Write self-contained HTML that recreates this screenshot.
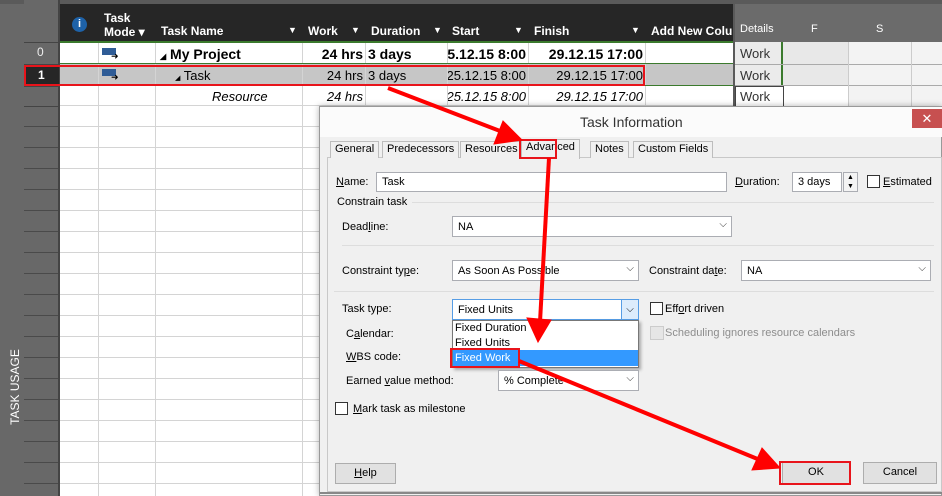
<!DOCTYPE html>
<html><head><meta charset="utf-8"><style>
*{margin:0;padding:0;box-sizing:border-box}
body{width:942px;height:496px;overflow:hidden;background:#fff;font-family:"Liberation Sans",sans-serif;position:relative}
.a{position:absolute;white-space:nowrap}
.hd{color:#fff;font-weight:bold;font-size:12px}
.dl{font-size:11px;color:#000;white-space:nowrap}
.in{background:#fff;border:1px solid #abadb3}
.sel{background:#fff;border:1px solid #abadb3}
.chev{position:absolute;right:4px;top:2px;font-size:10px;color:#333}
.cb{background:#fff;border:1px solid #333;width:13px;height:13px}
.btn{background:#e1e1e1;border:1px solid #adadad;font-size:11px;text-align:center;line-height:19px}
.tab{position:absolute;top:141px;height:17px;border:1px solid #bdbdbd;border-bottom:none;background:#f0f0f0;font-size:11px;line-height:15px;padding:0 4px;white-space:nowrap}
.red{position:absolute;border:2px solid #e8141b}
.clip{overflow:hidden}
.clip span{position:absolute;right:2px;top:0}
</style></head><body>
<div class="a" style="left:0;top:0;width:60px;height:496px;background:#686868"></div>
<div class="a" style="left:0;top:0;width:942px;height:4px;background:#5a5a5a"></div>
<div class="a" style="left:58px;top:0;width:2px;height:496px;background:#444"></div>
<div class="a" style="left:24px;top:0;width:34px;height:496px;background:repeating-linear-gradient(to bottom,transparent 0,transparent 20px,#4a4a4a 20px,#4a4a4a 21px);background-position:0 1px"></div>
<div class="a" style="left:24px;top:0;width:34px;height:107px;background:#686868"></div>
<div class="a" style="left:-30px;top:380px;width:90px;height:14px;transform:rotate(-90deg);color:#fff;font-size:12px;text-align:center">TASK USAGE</div>
<div class="a" style="left:24px;top:42px;width:34px;height:1px;background:#444"></div>
<div class="a" style="left:24px;top:64px;width:34px;height:1px;background:#444"></div>
<div class="a" style="left:24px;top:86px;width:34px;height:1px;background:#444"></div>
<div class="a" style="left:24px;top:106px;width:34px;height:1px;background:#444"></div>
<div class="a" style="left:37px;top:45px;color:#eee;font-size:12px">0</div>
<div class="a" style="left:25px;top:65px;width:34px;height:20px;background:#262626;color:#fff;font-size:12px;font-weight:bold;padding-left:13px;line-height:20px">1</div>

<div class="a" style="left:60px;top:42px;width:673px;height:454px;background:repeating-linear-gradient(to bottom,transparent 0,transparent 20px,#d4d4d4 20px,#d4d4d4 21px);background-position:0 1px"></div>
<div class="a" style="left:98px;top:42px;width:1px;height:454px;background:#d4d4d4"></div>
<div class="a" style="left:155px;top:42px;width:1px;height:454px;background:#d4d4d4"></div>
<div class="a" style="left:302px;top:42px;width:1px;height:454px;background:#d4d4d4"></div>
<div class="a" style="left:365px;top:42px;width:1px;height:65px;background:#d4d4d4"></div>
<div class="a" style="left:447px;top:42px;width:1px;height:65px;background:#d4d4d4"></div>
<div class="a" style="left:528px;top:42px;width:1px;height:65px;background:#d4d4d4"></div>
<div class="a" style="left:645px;top:42px;width:1px;height:65px;background:#d4d4d4"></div>
<div class="a" style="left:60px;top:4px;width:673px;height:38px;background:#262626"></div>
<div class="a" style="left:60px;top:41px;width:673px;height:2px;background:#3b7a2d"></div>
<div class="a" style="left:72px;top:17px;width:15px;height:15px;border-radius:50%;background:#1e62a8;color:#fff;font-size:11px;font-weight:bold;text-align:center;line-height:15px">i</div>
<div class="a hd" style="left:104px;top:11px;line-height:14px">Task<br>Mode ▾</div>
<div class="a hd" style="left:161px;top:24px">Task Name</div><div class="a hd" style="left:288px;top:25px;font-size:9px">▼</div>
<div class="a hd" style="left:308px;top:24px">Work</div><div class="a hd" style="left:351px;top:25px;font-size:9px">▼</div>
<div class="a hd" style="left:371px;top:24px">Duration</div><div class="a hd" style="left:433px;top:25px;font-size:9px">▼</div>
<div class="a hd" style="left:452px;top:24px">Start</div><div class="a hd" style="left:514px;top:25px;font-size:9px">▼</div>
<div class="a hd" style="left:534px;top:24px">Finish</div><div class="a hd" style="left:631px;top:25px;font-size:9px">▼</div>
<div class="a hd clip" style="left:651px;top:24px;width:82px;height:16px">Add New Column</div>
<div class="a" style="left:102px;top:48px;width:14px;height:7px;background:#2f5c96"></div><div class="a" style="left:111px;top:51px;font-size:9px">➜</div>
<div class="a" style="left:160px;top:46px;font-size:14px;font-weight:bold"><span style="font-size:8px">◢</span> My Project</div>
<div class="a" style="left:302px;top:46px;width:61px;text-align:right;font-size:14px;font-weight:bold">24 hrs</div>
<div class="a" style="left:368px;top:46px;font-size:14px;font-weight:bold">3 days</div>
<div class="a clip" style="left:448px;top:46px;width:80px;height:18px;font-size:14px;font-weight:bold"><span>25.12.15 8:00</span></div>
<div class="a" style="left:530px;top:46px;width:113px;text-align:right;font-size:14px;font-weight:bold">29.12.15 17:00</div>
<div class="a" style="left:60px;top:63px;width:673px;height:1px;background:#3b7a2d"></div>
<div class="a" style="left:60px;top:64px;width:673px;height:22px;background:#c6c6c6"></div>
<div class="a" style="left:98px;top:64px;width:1px;height:22px;background:#d4d4d4"></div>
<div class="a" style="left:155px;top:64px;width:1px;height:22px;background:#d4d4d4"></div>
<div class="a" style="left:302px;top:64px;width:1px;height:22px;background:#d4d4d4"></div>
<div class="a" style="left:365px;top:64px;width:1px;height:22px;background:#d4d4d4"></div>
<div class="a" style="left:447px;top:64px;width:1px;height:22px;background:#d4d4d4"></div>
<div class="a" style="left:528px;top:64px;width:1px;height:22px;background:#d4d4d4"></div>
<div class="a" style="left:645px;top:64px;width:1px;height:22px;background:#d4d4d4"></div>
<div class="a" style="left:102px;top:69px;width:14px;height:7px;background:#2f5c96"></div><div class="a" style="left:111px;top:72px;font-size:9px">➜</div>
<div class="a" style="left:175px;top:68px;font-size:13px"><span style="font-size:7px">◢</span> Task</div>
<div class="a" style="left:302px;top:68px;width:61px;text-align:right;font-size:13px">24 hrs</div>
<div class="a" style="left:368px;top:68px;font-size:13px">3 days</div>
<div class="a clip" style="left:448px;top:68px;width:80px;height:16px;font-size:13px"><span>25.12.15 8:00</span></div>
<div class="a" style="left:530px;top:68px;width:113px;text-align:right;font-size:13px">29.12.15 17:00</div>
<div class="a" style="left:60px;top:85px;width:673px;height:1px;background:#3b7a2d"></div>
<div class="a" style="left:212px;top:89px;font-size:13px;font-style:italic">Resource</div>
<div class="a" style="left:302px;top:89px;width:61px;text-align:right;font-size:13px;font-style:italic">24 hrs</div>
<div class="a clip" style="left:448px;top:89px;width:80px;height:16px;font-size:13px;font-style:italic"><span>25.12.15 8:00</span></div>
<div class="a" style="left:530px;top:89px;width:113px;text-align:right;font-size:13px;font-style:italic">29.12.15 17:00</div>

<div class="a" style="left:733px;top:4px;width:209px;height:103px;background:#5a5a5a"></div>
<div class="a" style="left:735px;top:4px;width:207px;height:38px;background:#6b6b6b"></div>
<div class="a" style="left:740px;top:23px;color:#fff;font-size:11px">Details</div>
<div class="a" style="left:811px;top:23px;color:#fff;font-size:11px">F</div>
<div class="a" style="left:876px;top:23px;color:#fff;font-size:11px">S</div>
<div class="a" style="left:735px;top:42px;width:207px;height:65px;background:#f3f3f3"></div>
<div class="a" style="left:783px;top:42px;width:65px;height:43px;background:#e8e8e8"></div>
<div class="a" style="left:783px;top:85px;width:65px;height:22px;background:#fff"></div>
<div class="a" style="left:735px;top:42px;width:48px;height:44px;background:#ebebeb;border-right:2px solid #3b7a2d"></div>
<div class="a" style="left:735px;top:86px;width:49px;height:21px;background:#fff;border:1px solid #444"></div>
<div class="a" style="left:735px;top:64px;width:207px;height:1px;background:#aaa"></div>
<div class="a" style="left:735px;top:85px;width:207px;height:1px;background:#aaa"></div>
<div class="a" style="left:848px;top:42px;width:1px;height:65px;background:#ccc"></div>
<div class="a" style="left:911px;top:42px;width:1px;height:65px;background:#ccc"></div>
<div class="a" style="left:740px;top:46px;font-size:13px;color:#333">Work</div>
<div class="a" style="left:740px;top:68px;font-size:13px;color:#333">Work</div>
<div class="a" style="left:740px;top:89px;font-size:13px;color:#333">Work</div>

<div class="a" style="left:319px;top:106px;width:623px;height:390px;background:#f0f0f0;border:1px solid #999;box-shadow:0 0 6px rgba(0,0,0,.3)"></div>
<div class="a" style="left:320px;top:107px;width:622px;height:30px;background:#fbfbfb"></div>
<div class="a" style="left:580px;top:114px;font-size:14px;color:#333">Task Information</div>
<div class="a" style="left:912px;top:109px;width:30px;height:19px;background:#c75050;color:#fff;font-size:13px;text-align:center;line-height:19px">✕</div>
<div class="a" style="left:327px;top:157px;width:615px;height:335px;border:1px solid #c8c8c8;background:#f0f0f0"></div>
<div class="a" style="left:320px;top:492px;width:622px;height:2px;background:#888"></div>
<div class="tab" style="left:330px">General</div>
<div class="tab" style="left:382px">Predecessors</div>
<div class="tab" style="left:460px">Resources</div>
<div class="tab" style="left:521px;top:139px;height:20px">Advanced</div>
<div class="tab" style="left:590px">Notes</div>
<div class="tab" style="left:633px">Custom Fields</div>

<div class="a dl" style="left:336px;top:176px"><u>N</u>ame:</div>
<div class="a in" style="left:376px;top:172px;width:351px;height:20px"><span class="dl" style="position:absolute;left:5px;top:3px">Task</span></div>
<div class="a dl" style="left:735px;top:176px"><u>D</u>uration:</div>
<div class="a in" style="left:792px;top:172px;width:50px;height:20px"><span class="dl" style="position:absolute;left:5px;top:3px">3 days</span></div>
<div class="a" style="left:843px;top:172px;width:15px;height:20px;border:1px solid #abadb3;background:#f4f4f4;font-size:7px;text-align:center;line-height:9px">▲<br>▼</div>
<div class="a cb" style="left:867px;top:175px"></div>
<div class="a dl" style="left:883px;top:176px"><u>E</u>stimated</div>
<div class="a dl" style="left:337px;top:196px">Constrain task</div>
<div class="a" style="left:412px;top:202px;width:522px;height:1px;background:#ddd"></div>
<div class="a dl" style="left:342px;top:221px">Dead<u>l</u>ine:</div>
<div class="a sel" style="left:452px;top:216px;width:280px;height:21px"><span class="dl" style="position:absolute;left:5px;top:4px">NA</span><span class="chev">⌵</span></div>
<div class="a" style="left:342px;top:245px;width:592px;height:1px;background:#ddd"></div>
<div class="a dl" style="left:342px;top:265px">Constraint ty<u>p</u>e:</div>
<div class="a sel" style="left:452px;top:260px;width:187px;height:21px"><span class="dl" style="position:absolute;left:5px;top:4px">As Soon As Possible</span><span class="chev">⌵</span></div>
<div class="a dl" style="left:649px;top:265px">Constraint da<u>t</u>e:</div>
<div class="a sel" style="left:741px;top:260px;width:190px;height:21px"><span class="dl" style="position:absolute;left:5px;top:4px">NA</span><span class="chev">⌵</span></div>
<div class="a" style="left:334px;top:291px;width:600px;height:1px;background:#ddd"></div>
<div class="a dl" style="left:342px;top:303px">Task type:</div>
<div class="a sel" style="left:452px;top:299px;width:187px;height:21px;border-color:#569de5"><span class="dl" style="position:absolute;left:5px;top:4px">Fixed Units</span><span style="position:absolute;right:0;top:0;width:17px;height:19px;background:#dcecfc;border-left:1px solid #569de5;font-size:10px;text-align:center;line-height:19px">⌵</span></div>
<div class="a cb" style="left:650px;top:302px"></div>
<div class="a dl" style="left:665px;top:303px">Eff<u>o</u>rt driven</div>
<div class="a dl" style="left:346px;top:328px">C<u>a</u>lendar:</div>
<div class="a" style="left:650px;top:326px;width:14px;height:14px;border:1px solid #ccc;background:#e6e6e6"></div>
<div class="a dl" style="left:665px;top:327px;color:#8d8d8d">Scheduling ignores resource calendars</div>
<div class="a dl" style="left:346px;top:351px"><u>W</u>BS code:</div>
<div class="a" style="left:452px;top:320px;width:187px;height:48px;background:#fff;border:1px solid #777;box-shadow:2px 2px 3px rgba(0,0,0,.3)"></div>
<div class="a dl" style="left:455px;top:322px">Fixed Duration</div>
<div class="a dl" style="left:455px;top:337px">Fixed Units</div>
<div class="a" style="left:453px;top:350px;width:185px;height:16px;background:#3399ff"></div>
<div class="a dl" style="left:455px;top:352px;color:#fff">Fixed Work</div>
<div class="a dl" style="left:346px;top:375px">Earned <u>v</u>alue method:</div>
<div class="a sel" style="left:498px;top:370px;width:141px;height:21px"><span class="dl" style="position:absolute;left:5px;top:4px">% Complete</span><span class="chev">⌵</span></div>
<div class="a cb" style="left:335px;top:402px"></div>
<div class="a dl" style="left:353px;top:403px"><u>M</u>ark task as milestone</div>
<div class="a btn" style="left:335px;top:463px;width:61px;height:21px"><u>H</u>elp</div>
<div class="a btn" style="left:782px;top:462px;width:68px;height:22px">OK</div>
<div class="a btn" style="left:863px;top:462px;width:74px;height:22px">Cancel</div>

<div class="red" style="left:24px;top:65px;width:621px;height:21px"></div>
<div class="red" style="left:519px;top:139px;width:38px;height:20px"></div>
<div class="red" style="left:450px;top:348px;width:70px;height:20px"></div>
<div class="red" style="left:779px;top:461px;width:72px;height:24px"></div>
<svg class="a" style="left:0;top:0" width="942" height="496">
<g stroke="#f00" stroke-width="4" fill="#f00">
<line x1="388" y1="88" x2="500" y2="131"/><polygon points="522,140 494,144 503,121" stroke-width="1"/>
<line x1="549" y1="158" x2="540" y2="322"/><polygon points="538,342 527,318 551,320" stroke-width="1"/>
<line x1="519" y1="361" x2="760" y2="460"/><polygon points="780,468 752,470 762,448" stroke-width="1"/>
</g></svg>
</body></html>
